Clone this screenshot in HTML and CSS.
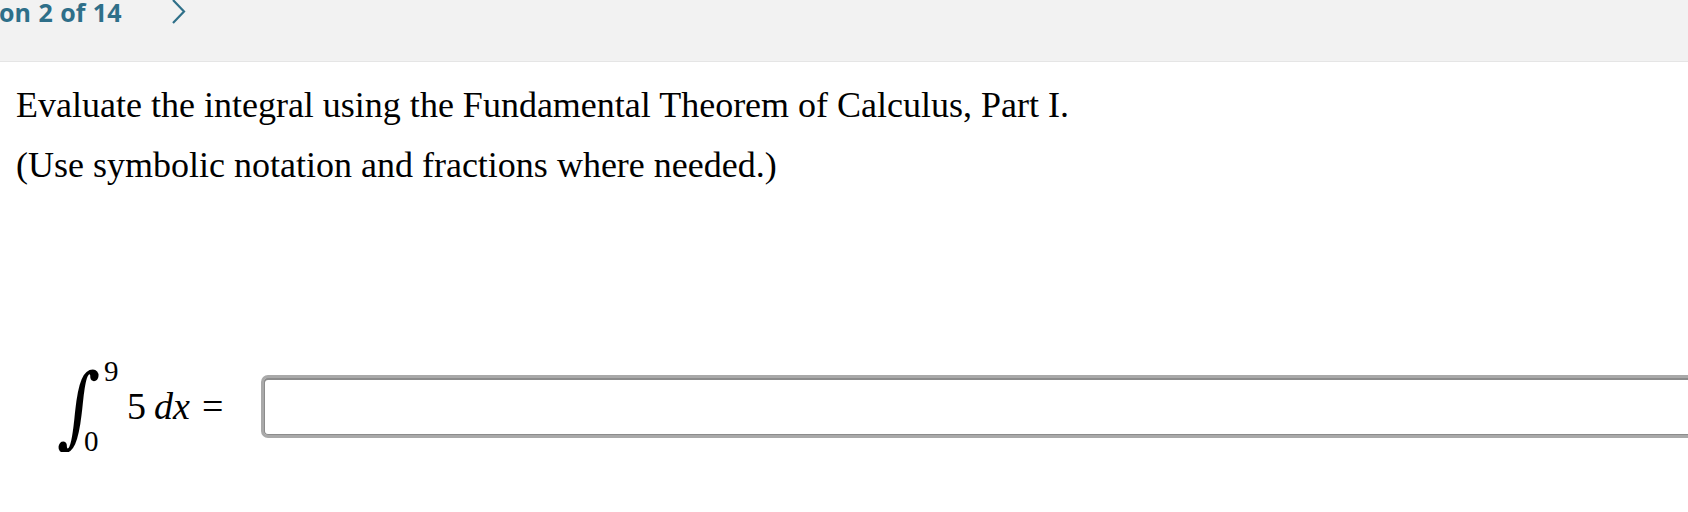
FILE: index.html
```html
<!DOCTYPE html>
<html>
<head>
<meta charset="utf-8">
<link rel="stylesheet" href="styles.css">
</head>
<body>
<header class="topbar">
  <span class="qcount">Question 2 of 14</span>
  <svg class="next" width="16" height="26" viewBox="0 0 16 26"><path d="M2 0 L13 11.5 L2 23" fill="none" stroke="#2f7089" stroke-width="2.2"/></svg>
</header>
<main class="content">
  <p class="line">Evaluate the integral using the Fundamental Theorem of Calculus, Part I.</p>
  <p class="line">(Use symbolic notation and fractions where needed.)</p>
  <div class="eq">
    <span class="int"><span class="intglyph">∫</span></span>
    <span class="limits"><span class="up">9</span><span class="lo">0</span></span>
    <span class="expr">5</span>
    <span class="var">dx</span>
    <span class="equals">=</span>
    <input class="answer" type="text">
  </div>
</main>
</body>
</html>
```
FILE: styles.css
```css
html, body {
  margin: 0;
  padding: 0;
  background: #ffffff;
  overflow: hidden;
}
.topbar {
  height: 61px;
  background: #f2f2f2;
  border-bottom: 1px solid #e5e5e5;
  display: flex;
  align-items: flex-start;
  overflow: hidden;
}
.qcount {
  font-family: "Open Sans", sans-serif;
  font-weight: 700;
  font-size: 25px;
  line-height: 30px;
  word-spacing: 1px;
  margin-top: -3px;
  margin-left: -83px;
  color: #2e6f89;
  white-space: nowrap;
}
.next {
  margin-left: 50px;
  margin-top: 0;
}
.content {
  padding-left: 16px;
  font-family: "Liberation Serif", "Times New Roman", serif;
  color: #000;
}
.line {
  font-size: 36px;
  line-height: 38px;
  margin: 24px 0 0 0;
}
.line + .line {
  margin-top: 22px;
}
.eq {
  display: flex;
  align-items: center;
  margin-top: 176px;
  height: 92px;
  font-family: "Liberation Serif", "Times New Roman", serif;
}
.int {
  flex: none;
  width: 40px;
  height: 92px;
  margin-left: 44px;
  display: flex;
  align-items: center;
  justify-content: center;
}
.intglyph {
  display: inline-block;
  font-family: "DejaVu Serif", serif;
  font-size: 81px;
  line-height: 92px;
  transform: translateX(-1px) skewX(-5deg) scale(0.88, 1.1);
}
.limits {
  flex: none;
  width: 19px;
  display: flex;
  flex-direction: column;
  justify-content: space-between;
  align-items: flex-start;
  height: 92px;
  font-size: 29px;
  line-height: 22px;
}
.up {
  margin-left: 4px;
}
.lo {
  margin-left: -16px;
}
.expr {
  font-size: 38px;
  margin-left: 8px;
}
.var {
  font-size: 38px;
  font-style: italic;
  margin-left: 8px;
}
.equals {
  font-size: 38px;
  margin-left: 12px;
}
.answer {
  flex: 1;
  margin-left: 38px;
  margin-right: -30px;
  height: 63px;
  box-sizing: border-box;
  border: 3px solid #a9a9a9;
  border-radius: 7px;
  box-shadow: inset 0 0 0 1px #8c8c8c, inset 0 1px 0 1px #8c8c8c;
  background: #fff;
  outline: none;
}
```
